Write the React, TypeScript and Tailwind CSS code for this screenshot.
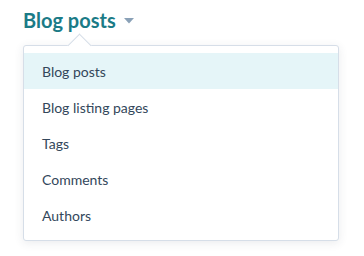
import React from "react";

const items = ["Blog posts", "Blog listing pages", "Tags", "Comments", "Authors"];

export default function App() {
  return (
    <div className="w-[364px] h-[256px] bg-white" style={{ fontFamily: "Lato, 'Noto Sans', sans-serif" }}>
      <div className="pl-[23px] pt-[5px]">
        <div className="flex items-center h-[30px]">
          <span className="text-[20px] leading-[30px] font-bold text-[#1b7b87]">Blog posts</span>
          <svg width="10" height="6" viewBox="0 0 10 6" className="ml-[8px] mt-[1px]">
            <path d="M0 0 L10 0 L5 5.5 Z" fill="#8aa1b7" />
          </svg>
        </div>
        <div className="relative mt-[10px] w-[316px] border border-[#d6dee8] rounded-[3px] bg-white shadow-[0_2px_10px_rgba(45,62,80,0.10)] py-[7px]">
          <div className="absolute left-[47px] -top-[9px] w-[17px] h-[17px] rotate-45 bg-[#ffffff] border-l border-t border-[#d6dee8]" />
          <div className="relative">
            {items.map((it, i) => (
              <div
                key={it}
                className={`h-[36px] flex items-center pl-[18px] text-[14px] text-[#33475b] ${i === 0 ? "bg-[#e5f5f8]" : ""}`}
              >
                {it}
              </div>
            ))}
          </div>
        </div>
      </div>
    </div>
  );
}
